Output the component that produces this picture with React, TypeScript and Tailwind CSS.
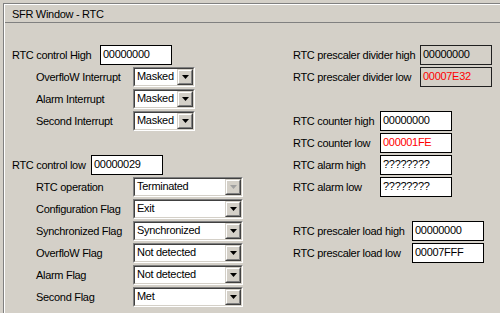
import React from 'react';

type BoxProps = { value: string; w: string; red?: boolean; readOnly?: boolean };

const TextBox: React.FC<BoxProps> = ({ value, w, red, readOnly }) => (
  <div
    className={`${w} h-[20px] border flex items-center pl-[2px] pb-[2px] ${
      readOnly ? 'border-[#202020] bg-[#d4d0c8]' : 'border-black bg-white'
    } ${red ? 'text-[#ff0000]' : 'text-black'}`}
  >
    {value}
  </div>
);

type SelectProps = { value: string; w: string; disabled?: boolean };

const Select: React.FC<SelectProps> = ({ value, w, disabled }) => (
  <div className={`${w} h-[20px] border border-t-[#808080] border-l-[#808080] border-r-white border-b-white`}>
    <div className="h-full flex bg-white border border-t-[#404040] border-l-[#404040] border-r-[#d4d0c8] border-b-[#d4d0c8]">
      <div className="flex-1 flex items-center pl-[2px] pb-[1px] overflow-hidden whitespace-nowrap">{value}</div>
      {/* drop-down button */}
      <div className="w-[16px] h-full bg-[#d4d0c8] border border-t-[#d4d0c8] border-l-[#d4d0c8] border-r-[#404040] border-b-[#404040]">
        <div className="h-full flex items-center justify-center border border-t-white border-l-white border-r-[#808080] border-b-[#808080]">
          <svg width="7" height="4" viewBox="0 0 7 4">
            <polygon points="0,0 7,0 3.5,4" fill={disabled ? '#a0a0a0' : '#000000'} />
          </svg>
        </div>
      </div>
    </div>
  </div>
);

const Label: React.FC<{ w: string; children: React.ReactNode }> = ({ w, children }) => (
  <div className={`${w} h-[20px] flex items-center whitespace-nowrap`}>{children}</div>
);

const Row: React.FC<{ children?: React.ReactNode; indent?: boolean }> = ({ children, indent }) => (
  <div className={`h-[22px] flex items-start ${indent ? 'pl-[24px]' : ''}`}>{children}</div>
);

const interrupts = ['OverfloW Interrupt', 'Alarm Interrupt', 'Second Interrupt'];

const flags = [
  { label: 'RTC operation', value: 'Terminated', disabled: true },
  { label: 'Configuration Flag', value: 'Exit' },
  { label: 'Synchronized Flag', value: 'Synchronized' },
  { label: 'OverfloW Flag', value: 'Not detected' },
  { label: 'Alarm Flag', value: 'Not detected' },
  { label: 'Second Flag', value: 'Met' },
];

export default function App() {
  return (
    <div className="w-[500px] h-[313px] overflow-hidden bg-[#d4d0c8] pt-[3px] pl-[3px] font-['Liberation_Sans',Arial,sans-serif] text-[11px] tracking-[-0.3px] text-black">
      <div className="h-full border-t border-l border-[#808080]">
        <div className="h-full border-t border-l border-white">
          {/* Title */}
          <div className="h-[18px] border-b border-[#808080] pl-[7px] pt-[2px] flex items-center">SFR Window - RTC</div>

          <div className="flex pt-[22px]">
            {/* Left column */}
            <div className="w-[288px] pl-[7px]">
              <Row>
                <Label w="w-[88px]">RTC control High</Label>
                <TextBox w="w-[72px]" value="00000000" />
              </Row>
              {interrupts.map(name => (
                <Row key={name} indent>
                  <Label w="w-[97px]">{name}</Label>
                  <Select w="w-[62px]" value="Masked" />
                </Row>
              ))}
              <Row />
              <Row>
                <Label w="w-[79px]">RTC control low</Label>
                <TextBox w="w-[72px]" value="00000029" />
              </Row>
              {flags.map(f => (
                <Row key={f.label} indent>
                  <Label w="w-[97px]">{f.label}</Label>
                  <Select w="w-[110px]" value={f.value} disabled={f.disabled} />
                </Row>
              ))}
            </div>

            {/* Right column */}
            <div className="flex-1">
              <Row>
                <Label w="w-[127px]">RTC prescaler divider high</Label>
                <TextBox w="w-[72px]" value="00000000" readOnly />
              </Row>
              <Row>
                <Label w="w-[127px]">RTC prescaler divider low</Label>
                <TextBox w="w-[72px]" value="00007E32" readOnly red />
              </Row>
              <Row />
              <Row>
                <Label w="w-[87px]">RTC counter high</Label>
                <TextBox w="w-[72px]" value="00000000" />
              </Row>
              <Row>
                <Label w="w-[87px]">RTC counter low</Label>
                <TextBox w="w-[72px]" value="000001FE" red />
              </Row>
              <Row>
                <Label w="w-[87px]">RTC alarm high</Label>
                <TextBox w="w-[72px]" value="????????" />
              </Row>
              <Row>
                <Label w="w-[87px]">RTC alarm low</Label>
                <TextBox w="w-[72px]" value="????????" />
              </Row>
              <Row />
              <Row>
                <Label w="w-[119px]">RTC prescaler load high</Label>
                <TextBox w="w-[72px]" value="00000000" />
              </Row>
              <Row>
                <Label w="w-[119px]">RTC prescaler load low</Label>
                <TextBox w="w-[72px]" value="00007FFF" />
              </Row>
            </div>
          </div>
        </div>
      </div>
    </div>
  );
}
